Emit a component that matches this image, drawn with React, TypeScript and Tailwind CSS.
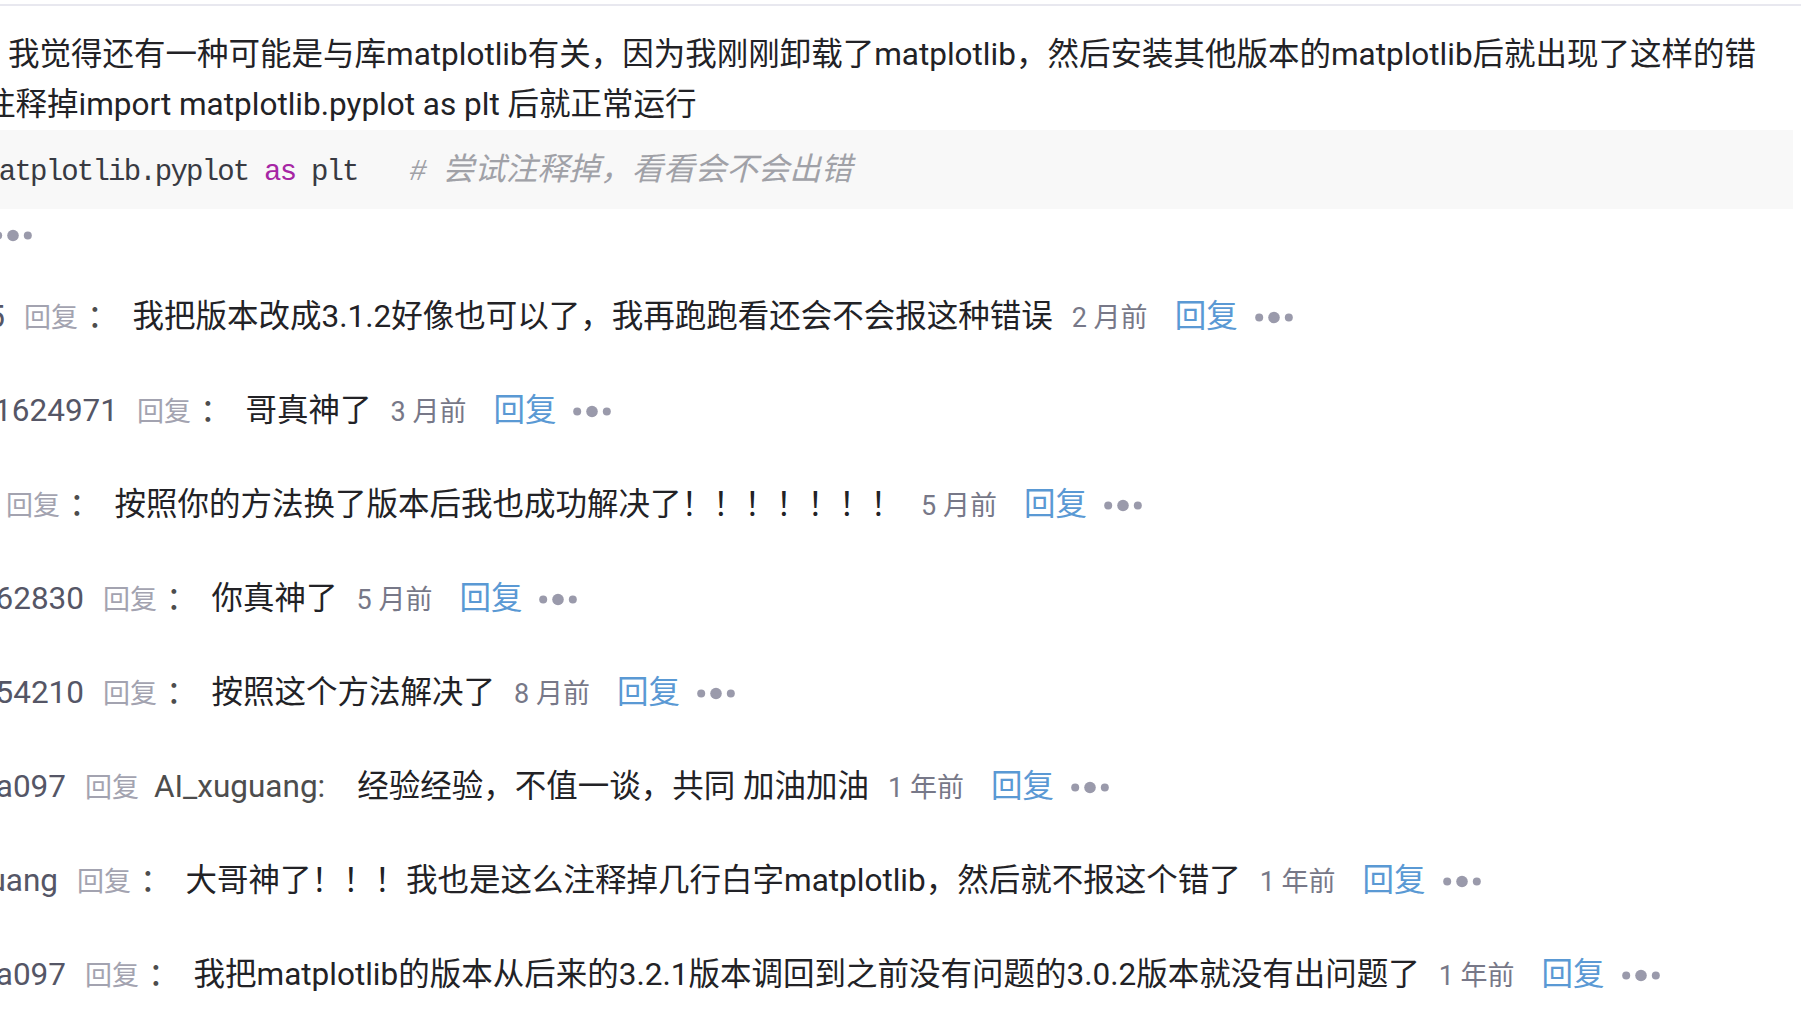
import React from 'react'

interface Reply {
  name: string
  nameBox: string
  nick: string
  nickClass: string
  contentClass: string
  content: string
  time: string
}

const replies: Reply[] = [
  {
    name: 'weixin_46001365',
    nameBox: 'w-[24px]',
    nick: '：',
    nickClass: 'ml-[9px]',
    contentClass: 'ml-[14px]',
    content: '我把版本改成3.1.2好像也可以了，我再跑跑看还会不会报这种错误',
    time: '2 月前',
  },
  {
    name: 'weixin_41624971',
    nameBox: 'w-[137px]',
    nick: '：',
    nickClass: 'ml-[9px]',
    contentClass: 'ml-[14px]',
    content: '哥真神了',
    time: '3 月前',
  },
  {
    name: 'qq_39517320',
    nameBox: 'w-[6px]',
    nick: '：',
    nickClass: 'ml-[9px]',
    contentClass: 'ml-[14px]',
    content: '按照你的方法换了版本后我也成功解决了！！！！！！！',
    time: '5 月前',
  },
  {
    name: 'weixin_45162830',
    nameBox: 'w-[103px]',
    nick: '：',
    nickClass: 'ml-[9px]',
    contentClass: 'ml-[14px]',
    content: '你真神了',
    time: '5 月前',
  },
  {
    name: 'weixin_44854210',
    nameBox: 'w-[103px]',
    nick: '：',
    nickClass: 'ml-[9px]',
    contentClass: 'ml-[14px]',
    content: '按照这个方法解决了',
    time: '8 月前',
  },
  {
    name: 'qq_41645a097',
    nameBox: 'w-[85px]',
    nick: 'AI_xuguang:',
    nickClass: 'ml-[15px]',
    contentClass: 'ml-[32px]',
    content: '经验经验，不值一谈，共同 加油加油',
    time: '1 年前',
  },
  {
    name: 'AI_xuguang',
    nameBox: 'w-[77px]',
    nick: '：',
    nickClass: 'ml-[9px]',
    contentClass: 'ml-[14px]',
    content: '大哥神了！！！我也是这么注释掉几行白字matplotlib，然后就不报这个错了',
    time: '1 年前',
  },
  {
    name: 'qq_41645a097',
    nameBox: 'w-[85px]',
    nick: '：',
    nickClass: 'ml-[9px]',
    contentClass: 'ml-[14px]',
    content: '我把matplotlib的版本从后来的3.2.1版本调回到之前没有问题的3.0.2版本就没有出问题了',
    time: '1 年前',
  },
]

function MoreDots() {
  return (
    <svg width="38" height="13" viewBox="0 0 38 13" className="shrink-0">
      <circle cx="4.2" cy="6.5" r="4" fill="#9a9aab" />
      <circle cx="19" cy="6.5" r="5.8" fill="#9a9aab" />
      <circle cx="33.8" cy="6.5" r="4" fill="#9a9aab" />
    </svg>
  )
}

function ReplyRow({ r }: { r: Reply }) {
  return (
    <div className="h-[94px] flex items-center pt-[2px]">
      <div className="flex items-baseline leading-[50px] whitespace-nowrap">
        <div className={`${r.nameBox} shrink-0 flex justify-end overflow-hidden`}>
          <span className="shrink-0 mr-[19px] text-[31.5px] text-[#555666]">{r.name}</span>
        </div>
        <span className="text-[27px] text-[#a3a3b0]">回复</span>
        <span className={`${r.nickClass} text-[31.5px] text-[#4d4d4d]`}>{r.nick}</span>
        <span className={`${r.contentClass} text-[31.5px] text-[#222226]`}>{r.content}</span>
        <span className="ml-[19px] text-[27px] text-[#777888]">{r.time}</span>
        <span className="ml-[27px] text-[31.5px] text-[#5a99d4]">回复</span>
        <span className="ml-[17px] self-center flex items-center">
          <MoreDots />
        </span>
      </div>
    </div>
  )
}

export default function App() {
  return (
    <div className="w-[1801px] h-[1026px] overflow-hidden bg-white font-['Roboto','Noto_Sans_CJK_SC',sans-serif]">
      <div className="mt-[4px] h-[2px] bg-[#e8e8ef]" />

      <p className="mt-[24px] ml-[-79px] w-[1869px] indent-[87px] text-[31.5px] leading-[50px] text-[#222226]">
        我觉得还有一种可能是与库matplotlib有关，因为我刚刚卸载了matplotlib，然后安装其他版本的matplotlib后就出现了这样的错误，注释掉import matplotlib.pyplot as plt 后就正常运行
      </p>

      <div className="ml-[-144px] w-[1937px] h-[79px] bg-[#f8f8f8] pl-[18px] flex items-center">
        <div className="flex items-baseline leading-[48px] whitespace-pre">
          <span className="font-['Liberation_Mono',monospace] text-[29px] tracking-[-1.8px] text-[#383a42]">
            {'import matplotlib.pyplot '}
            <span className="text-[#a626a4]">as</span>
            {' plt   '}
            <span className="ml-[5px] italic text-[#a0a1a7]">{'# '}</span>
          </span>
          <span className="ml-[2px] italic text-[31.5px] text-[#a0a1a7] font-['Noto_Sans_CJK_SC',sans-serif]">
            尝试注释掉，看看会不会出错
          </span>
        </div>
      </div>

      <div className="h-[52px] ml-[-6px] flex items-center">
        <MoreDots />
      </div>

      <div className="mt-[8px]">
        {replies.map((r, i) => (
          <ReplyRow key={i} r={r} />
        ))}
      </div>
    </div>
  )
}
